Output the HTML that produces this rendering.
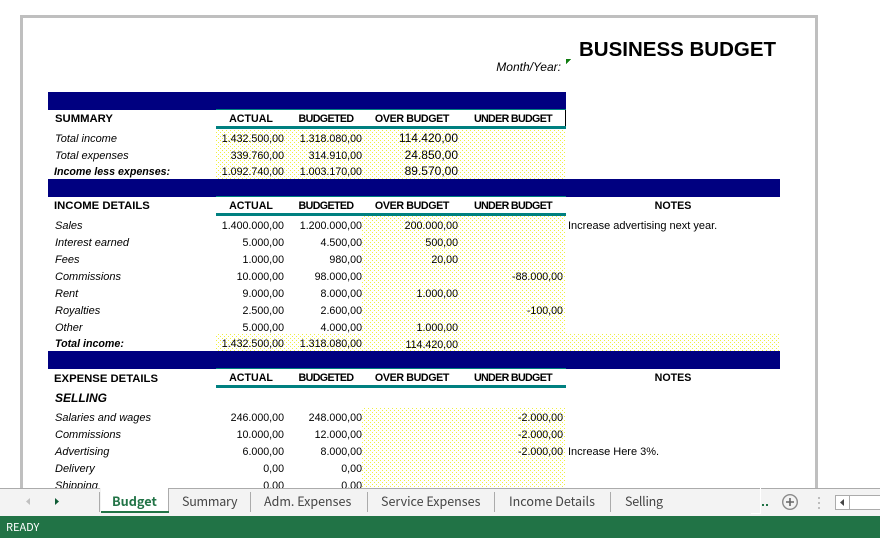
<!DOCTYPE html>
<html lang="en"><head><meta charset="utf-8"><title>Business Budget</title>
<style>
html,body{margin:0;padding:0;background:#fff}
#p{position:relative;width:880px;height:538px;overflow:hidden;background:#fff;font-family:"Liberation Sans",Arial,sans-serif;color:#000}
#s{position:absolute;left:0;top:0;width:880px;height:488px;overflow:hidden}
#s div,#t div,#t span{position:absolute}
.b{background:#000080}.g{background:#008080}
.r,.l,.h,.n,.lb,.big,.sec{position:absolute;white-space:nowrap;line-height:14px;font-size:10.67px}
.c1{right:596px}.c2{right:518px}.c3{right:422px}.c4{right:317px}
.r{text-align:right}
.big{font-size:12px;right:422px}
.l{left:55px;font-style:italic;font-size:11px}
.lb{left:55px;font-style:italic;font-weight:bold}
.sec{left:54px;font-weight:bold;font-size:11.3px}
.h{font-weight:bold;width:100px;text-align:center;font-size:10.67px}
.n{left:568px;font-size:11px}
.h1{left:201px}.h2{left:276px;letter-spacing:-.6px}.h3{left:362px;letter-spacing:-.36px}.h4{left:463px;letter-spacing:-.65px}.h5{left:623px}
#t{position:absolute;left:0;top:488px;width:880px;height:28px;background:#f3f3f3;border-top:0}
.tab{font-family:"Noto Sans CJK JP","Liberation Sans",sans-serif;font-size:12.5px;line-height:18px;top:4px;color:#444;white-space:nowrap}
.sep{width:1px;top:4px;height:20px;background:#ababab}
#st{position:absolute;left:0;top:516px;width:880px;height:22px;background:#217346;color:#fff;font-family:"Noto Sans CJK JP","Liberation Sans",sans-serif;font-size:11px;line-height:22px}
</style></head><body>
<div id="p">
<div id="s">
<svg width="880" height="488" style="position:absolute;left:0;top:0" shape-rendering="crispEdges">
<defs><pattern id="d" width="4" height="4" patternUnits="userSpaceOnUse"><rect x="0" y="0" width="1" height="1" fill="#f0f040"/><rect x="2" y="2" width="1" height="1" fill="#f0f040"/></pattern></defs>
<rect x="216" y="129" width="350" height="50" fill="url(#d)"/>
<rect x="362" y="216" width="204" height="118" fill="url(#d)"/>
<rect x="216" y="334" width="564" height="17" fill="url(#d)"/>
<rect x="362" y="407" width="204" height="81" fill="url(#d)"/>
<polygon points="566,59 571,59 566,64" fill="#107c10"/>
</svg>
<div style="left:20px;top:15px;width:3px;height:473px;background:#bfbfbf"></div>
<div style="left:815px;top:15px;width:3px;height:473px;background:#bfbfbf"></div>
<div style="left:20px;top:15px;width:798px;height:3px;background:#bfbfbf"></div>

<div style="left:579px;top:38px;font-size:20.5px;line-height:24px;font-weight:bold;white-space:nowrap">BUSINESS BUDGET</div>
<div style="right:319px;top:60px;font-size:12px;line-height:14px;font-style:italic;white-space:nowrap">Month/Year:</div>

<div class="b" style="left:48px;top:92px;width:518px;height:18px"></div>
<div class="g" style="left:216px;top:109px;width:350px;height:1px"></div>
<div class="g" style="left:216px;top:126px;width:350px;height:3px"></div>
<div style="left:565px;top:110px;width:1px;height:16px;background:#000"></div>
<div class="b" style="left:48px;top:179px;width:732px;height:18px"></div>
<div class="g" style="left:216px;top:196px;width:350px;height:1px"></div>
<div class="g" style="left:216px;top:213px;width:350px;height:3px"></div>
<div class="b" style="left:48px;top:351px;width:732px;height:18px"></div>
<div class="g" style="left:216px;top:368px;width:350px;height:1px"></div>
<div class="g" style="left:216px;top:385px;width:350px;height:3px"></div>

<span class="sec" style="left:55px;top:112px">SUMMARY</span>
<span class="h h1" style="top:112px">ACTUAL</span><span class="h h2" style="top:112px">BUDGETED</span><span class="h h3" style="top:112px">OVER BUDGET</span><span class="h h4" style="top:112px">UNDER BUDGET</span>
<span class="l" style="top:132px">Total income</span><span class="r c1" style="top:132px">1.432.500,00</span><span class="r c2" style="top:132px">1.318.080,00</span><span class="big" style="top:131px">114.420,00</span>
<span class="l" style="top:149px">Total expenses</span><span class="r c1" style="top:149px">339.760,00</span><span class="r c2" style="top:149px">314.910,00</span><span class="big" style="top:148px">24.850,00</span>
<span class="lb" style="top:165px;left:54px">Income less expenses:</span><span class="r c1" style="top:165px">1.092.740,00</span><span class="r c2" style="top:165px">1.003.170,00</span><span class="big" style="top:164px">89.570,00</span>

<span class="sec" style="top:199px">INCOME DETAILS</span>
<span class="h h1" style="top:199px">ACTUAL</span><span class="h h2" style="top:199px">BUDGETED</span><span class="h h3" style="top:199px">OVER BUDGET</span><span class="h h4" style="top:199px">UNDER BUDGET</span><span class="h h5" style="top:199px">NOTES</span>
<span class="l" style="top:219px">Sales</span><span class="r c1" style="top:219px">1.400.000,00</span><span class="r c2" style="top:219px">1.200.000,00</span><span class="r c3" style="top:219px">200.000,00</span><span class="n" style="top:219px">Increase advertising next year.</span>
<span class="l" style="top:236px">Interest earned</span><span class="r c1" style="top:236px">5.000,00</span><span class="r c2" style="top:236px">4.500,00</span><span class="r c3" style="top:236px">500,00</span>
<span class="l" style="top:253px">Fees</span><span class="r c1" style="top:253px">1.000,00</span><span class="r c2" style="top:253px">980,00</span><span class="r c3" style="top:253px">20,00</span>
<span class="l" style="top:270px">Commissions</span><span class="r c1" style="top:270px">10.000,00</span><span class="r c2" style="top:270px">98.000,00</span><span class="r c4" style="top:270px">-88.000,00</span>
<span class="l" style="top:287px">Rent</span><span class="r c1" style="top:287px">9.000,00</span><span class="r c2" style="top:287px">8.000,00</span><span class="r c3" style="top:287px">1.000,00</span>
<span class="l" style="top:304px">Royalties</span><span class="r c1" style="top:304px">2.500,00</span><span class="r c2" style="top:304px">2.600,00</span><span class="r c4" style="top:304px">-100,00</span>
<span class="l" style="top:321px">Other</span><span class="r c1" style="top:321px">5.000,00</span><span class="r c2" style="top:321px">4.000,00</span><span class="r c3" style="top:321px">1.000,00</span>
<span class="lb" style="top:337px">Total income:</span><span class="r c1" style="top:337px">1.432.500,00</span><span class="r c2" style="top:337px">1.318.080,00</span><span class="r c3" style="top:338px">114.420,00</span>

<span class="sec" style="top:372px">EXPENSE DETAILS</span>
<span class="h h1" style="top:371px">ACTUAL</span><span class="h h2" style="top:371px">BUDGETED</span><span class="h h3" style="top:371px">OVER BUDGET</span><span class="h h4" style="top:371px">UNDER BUDGET</span><span class="h h5" style="top:371px">NOTES</span>
<span class="lb" style="top:391px;font-size:12px">SELLING</span>
<span class="l" style="top:411px">Salaries and wages</span><span class="r c1" style="top:411px">246.000,00</span><span class="r c2" style="top:411px">248.000,00</span><span class="r c4" style="top:411px">-2.000,00</span>
<span class="l" style="top:428px">Commissions</span><span class="r c1" style="top:428px">10.000,00</span><span class="r c2" style="top:428px">12.000,00</span><span class="r c4" style="top:428px">-2.000,00</span>
<span class="l" style="top:445px">Advertising</span><span class="r c1" style="top:445px">6.000,00</span><span class="r c2" style="top:445px">8.000,00</span><span class="r c4" style="top:445px">-2.000,00</span><span class="n" style="top:445px">Increase Here 3%.</span>
<span class="l" style="top:462px">Delivery</span><span class="r c1" style="top:462px">0,00</span><span class="r c2" style="top:462px">0,00</span>
<span class="l" style="top:479px">Shipping</span><span class="r c1" style="top:479px">0,00</span><span class="r c2" style="top:479px">0,00</span>
</div>

<div id="t">
<div style="left:0;top:0;width:100px;height:1px;background:#ababab"></div>
<div style="left:168px;top:0;width:712px;height:1px;background:#ababab"></div>
<div style="left:101px;top:0;width:67px;height:23px;background:#fff"></div>
<div style="left:168px;top:0;width:1px;height:23px;background:#ababab"></div>
<div style="left:101px;top:23px;width:68px;height:2px;background:#217346"></div>
<div class="sep" style="left:99px"></div>
<div class="sep" style="left:250px"></div>
<div class="sep" style="left:367px"></div>
<div class="sep" style="left:494px"></div>
<div class="sep" style="left:610px"></div>
<svg width="880" height="28" style="position:absolute;left:0;top:0">
<polygon points="30,10 26,13.5 30,17" fill="#c0c0c0"/>
<polygon points="55,10 59,13.5 55,17" fill="#0f5b35"/>
<rect x="762" y="16" width="2" height="2" fill="#217346"/><rect x="766" y="16" width="2" height="2" fill="#217346"/>
<circle cx="790" cy="14" r="7.3" fill="none" stroke="#8a8a8a" stroke-width="1.4"/>
<path d="M786 14H794M790 10V18" stroke="#666" stroke-width="1.6" fill="none"/>
<rect x="818" y="9" width="2" height="2" fill="#bdbdbd"/><rect x="818" y="14" width="2" height="2" fill="#bdbdbd"/><rect x="818" y="19" width="2" height="2" fill="#bdbdbd"/>
<rect x="835.5" y="7.5" width="14" height="14" fill="#fff" stroke="#ababab"/>
<rect x="849.5" y="7.5" width="40" height="14" fill="#fff" stroke="#ababab"/>
<polygon points="844,11 840,14.5 844,18" fill="#444"/>
</svg>
<div style="left:760px;top:0;width:1px;height:26px;background:#fff"></div>
<div style="left:751px;top:25px;width:9px;height:1px;background:#fff"></div>
<span class="tab" style="left:112px;color:#217346;font-weight:bold;font-size:12.7px">Budget</span>
<span class="tab" style="left:182px;letter-spacing:-.25px">Summary</span>
<span class="tab" style="left:264px">Adm. Expenses</span>
<span class="tab" style="left:381px">Service Expenses</span>
<span class="tab" style="left:509px">Income Details</span>
<span class="tab" style="left:625px;letter-spacing:-.25px">Selling</span>
</div>
<div id="st"><span style="position:absolute;left:6px">READY</span></div>
</div>
</body></html>
